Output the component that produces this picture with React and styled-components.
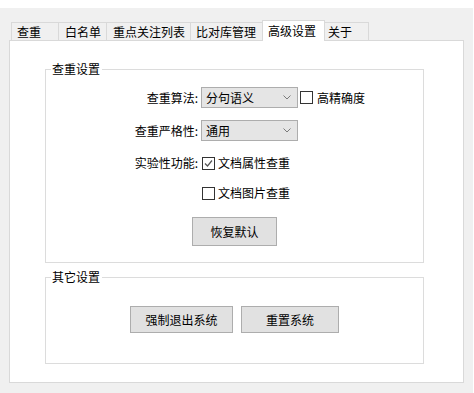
import React, { useState } from 'react';
import styled, { createGlobalStyle } from 'styled-components';

const GlobalStyle = createGlobalStyle`
  body {
    margin: 0;
    background: #ffffff;
    font-family: "Noto Sans CJK SC", "Noto Sans", sans-serif;
    font-size: 12px;
    color: #000;
  }
`;

//outer window area
const Frame = styled.div`
  box-sizing: border-box;
  margin-top: 8px;
  width: 473px;
  height: 385px;
  background: #f0f0f0;
  padding: 12px 0 0 9px;
`;

//tab strip
const TabRow = styled.div`
  display: flex;
  align-items: flex-end;
  height: 20px;
  margin-left: 2px;
`;

const Tab = styled.div`
  box-sizing: border-box;
  width: ${p => p.$w}px;
  height: ${p => (p.$active ? 21 : 18)}px;
  margin-right: -1px;
  margin-bottom: ${p => (p.$active ? -1 : 0)}px;
  border: 1px solid #d9d9d9;
  border-bottom: none;
  background: ${p => (p.$active ? '#ffffff' : '#f0f0f0')};
  position: relative;
  z-index: ${p => (p.$active ? 2 : 1)};
  padding-left: ${p => p.$pad}px;
  line-height: ${p => (p.$active ? 20 : 17)}px;
  white-space: nowrap;
  cursor: default;
`;

const Panel = styled.div`
  box-sizing: border-box;
  width: 455px;
  height: 343px;
  background: #fff;
  border: 1px solid #d9d9d9;
  padding: 21px 0 0 35px;
`;

//group boxes
const Group = styled.fieldset`
  box-sizing: border-box;
  width: 379px;
  height: ${p => p.$h}px;
  margin: 0 0 ${p => p.$mb || 0}px 0;
  padding: ${p => p.$pad};
  border: 1px solid #dcdcdc;
  min-inline-size: auto;
`;

const Legend = styled.legend`
  padding: 0 2px 0 1px;
  margin-left: 5px;
  line-height: 14px;
`;

const Row = styled.div`
  display: flex;
  align-items: center;
  height: ${p => p.$h || 21}px;
  margin-top: ${p => p.$mt || 0}px;
`;

const Label = styled.span`
  width: 152px;
  margin-right: 3px;
  text-align: right;
  line-height: 14px;
  flex-shrink: 0;
`;

const SelectBox = styled.div`
  box-sizing: border-box;
  width: 97px;
  height: 21px;
  background: #e5e5e5;
  border: 1px solid #adadad;
  display: flex;
  align-items: center;
  justify-content: space-between;
  padding: 0 6px 0 4px;
  line-height: 14px;
`;

const Check = styled.span`
  box-sizing: border-box;
  width: 13px;
  height: 13px;
  border: 1px solid #333;
  background: #fff;
  margin-left: ${p => p.$ml || 0}px;
  display: inline-flex;
  align-items: center;
  justify-content: center;
  flex-shrink: 0;
`;

const CheckText = styled.span`
  margin-left: ${p => p.$ml || 4}px;
  line-height: 14px;
`;

const ButtonRow = styled.div`
  display: flex;
  justify-content: center;
  gap: 8px;
  margin-top: ${p => p.$mt || 0}px;
`;

const Button = styled.button`
  box-sizing: border-box;
  width: ${p => p.$w}px;
  height: ${p => p.$h}px;
  background: #e1e1e1;
  border: 1px solid #adadad;
  font-family: inherit;
  font-size: 12px;
  color: #000;
  padding: 0;
  border-radius: 0;
`;

const Chevron = () => (
  <svg width="8" height="5" viewBox="0 0 8 5">
    <polyline points="0.5,0.5 4,4 7.5,0.5" fill="none" stroke="#7a7a7a" strokeWidth="1" />
  </svg>
);

const Tick = () => (
  <svg width="11" height="11" viewBox="0 0 11 11">
    <polyline points="2,5.5 4.5,8 9,2.5" fill="none" stroke="#555" strokeWidth="1.2" />
  </svg>
);

const tabs = [
  { name: '查重', w: 48, pad: 5 },
  { name: '白名单', w: 49, pad: 6 },
  { name: '重点关注列表', w: 85, pad: 6 },
  { name: '比对库管理', w: 73, pad: 5 },
  { name: '高级设置', w: 63, pad: 5 },
  { name: '关于', w: 45, pad: 3 },
];

function App() {
  const [active, setActive] = useState(4);

  return (
    <>
      <GlobalStyle />
      <Frame>
        <TabRow>
          {tabs.map((t, i) => (
            <Tab key={t.name} $w={t.w} $pad={t.pad} $active={i === active} onClick={() => setActive(i)}>
              {t.name}
            </Tab>
          ))}
        </TabRow>
        <Panel>
          <Group $h={201} $pad="11px 0 0 0" $mb={7}>
            <Legend>查重设置</Legend>
            <Row>
              <Label>查重算法:</Label>
              <SelectBox>
                <span>分句语义</span>
                <Chevron />
              </SelectBox>
              <Check $ml={2} />
              <CheckText $ml={4}>高精确度</CheckText>
            </Row>
            <Row $mt={12}>
              <Label>查重严格性:</Label>
              <SelectBox>
                <span>通用</span>
                <Chevron />
              </SelectBox>
            </Row>
            <Row $mt={12} $h={20}>
              <Label>实验性功能:</Label>
              <Check $ml={1}><Tick /></Check>
              <CheckText $ml={3}>文档属性查重</CheckText>
            </Row>
            <Row $mt={10} $h={20}>
              <Label />
              <Check $ml={1} />
              <CheckText $ml={3}>文档图片查重</CheckText>
            </Row>
            <ButtonRow $mt={14}>
              <Button $w={85} $h={29}>恢复默认</Button>
            </ButtonRow>
          </Group>
          <Group $h={94} $pad="22px 0 0 0">
            <Legend>其它设置</Legend>
            <ButtonRow>
              <Button $w={103} $h={27}>强制退出系统</Button>
              <Button $w={98} $h={27}>重置系统</Button>
            </ButtonRow>
          </Group>
        </Panel>
      </Frame>
    </>
  );
}

export default App;
